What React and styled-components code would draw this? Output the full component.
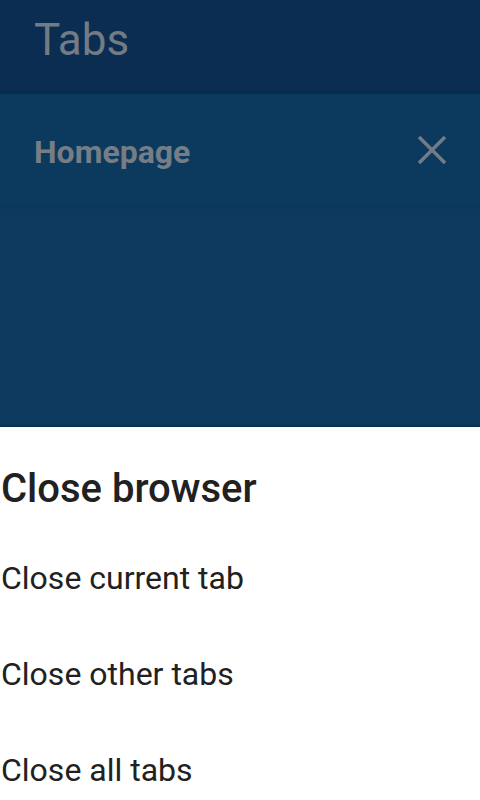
import React from 'react';
import styled, { createGlobalStyle } from 'styled-components';

const GlobalStyle = createGlobalStyle`
  html, body {
    margin: 0;
    padding: 0;
    background: #ffffff;
    font-family: Roboto, "Noto Sans", Arial, sans-serif;
  }
`;

const Page = styled.div`
  width: 480px;
  height: 800px;
  display: flex;
  flex-direction: column;
  overflow: hidden;
`;

const Toolbar = styled.div`
  height: 94px;
  box-sizing: border-box;
  padding: 18px 34px 0;
  background-color: #0b2d52;
`;

const Title = styled.h1`
  margin: 0;
  font-size: 44px;
  line-height: 44px;
  font-weight: 400;
  color: #737b84;
`;

const TabRow = styled.div`
  height: 111px;
  box-sizing: border-box;
  padding: 0 33px 0 34px;
  display: flex;
  align-items: center;
  justify-content: space-between;
  background-color: #0c3a5f;
  box-shadow: 0 1px 5px rgba(0, 0, 0, 0.1);
  position: relative;
`;

const TabTitle = styled.span`
  font-size: 32px;
  line-height: 40px;
  font-weight: 700;
  color: #767d85;
  margin-top: 4px;
`;

const CloseButton = styled.button`
  background: transparent;
  border: none;
  padding: 0;
  width: 30px;
  height: 30px;
  display: flex;
  cursor: pointer;
`;

const TabList = styled.div`
  flex: 1;
  background-color: #0d3a5e;
  box-shadow: inset 0 -3px 3px -2px rgba(0, 0, 0, 0.25);
`;

const Sheet = styled.div`
  height: 373px;
  flex-shrink: 0;
  background: #ffffff;
  padding: 38px 0 0 1px;
  box-sizing: border-box;
`;

const SheetTitle = styled.h2`
  margin: 0 0 17px;
  font-size: 40px;
  line-height: 48px;
  font-weight: 500;
  color: #212121;
`;

const MenuItem = styled.div`
  font-size: 32px;
  line-height: 40px;
  padding: 28px 0;
  color: #212121;
  cursor: pointer;
`;

function CloseIcon() {
  return (
    <svg width="30" height="30" viewBox="0 0 30 30">
      <path d="M2 2 L28 28 M28 2 L2 28" stroke="#737b84" strokeWidth="3.5" fill="none" />
    </svg>
  );
}

function App() {
  const items = ['Close current tab', 'Close other tabs', 'Close all tabs'];

  return (
    <>
      <GlobalStyle />
      <Page>
        <Toolbar>
          <Title>Tabs</Title>
        </Toolbar>
        <TabRow>
          <TabTitle>Homepage</TabTitle>
          <CloseButton aria-label="Close tab">
            <CloseIcon />
          </CloseButton>
        </TabRow>
        <TabList />
        <Sheet>
          <SheetTitle>Close browser</SheetTitle>
          {items.map((item) => (
            <MenuItem key={item}>{item}</MenuItem>
          ))}
        </Sheet>
      </Page>
    </>
  );
}

export default App;
